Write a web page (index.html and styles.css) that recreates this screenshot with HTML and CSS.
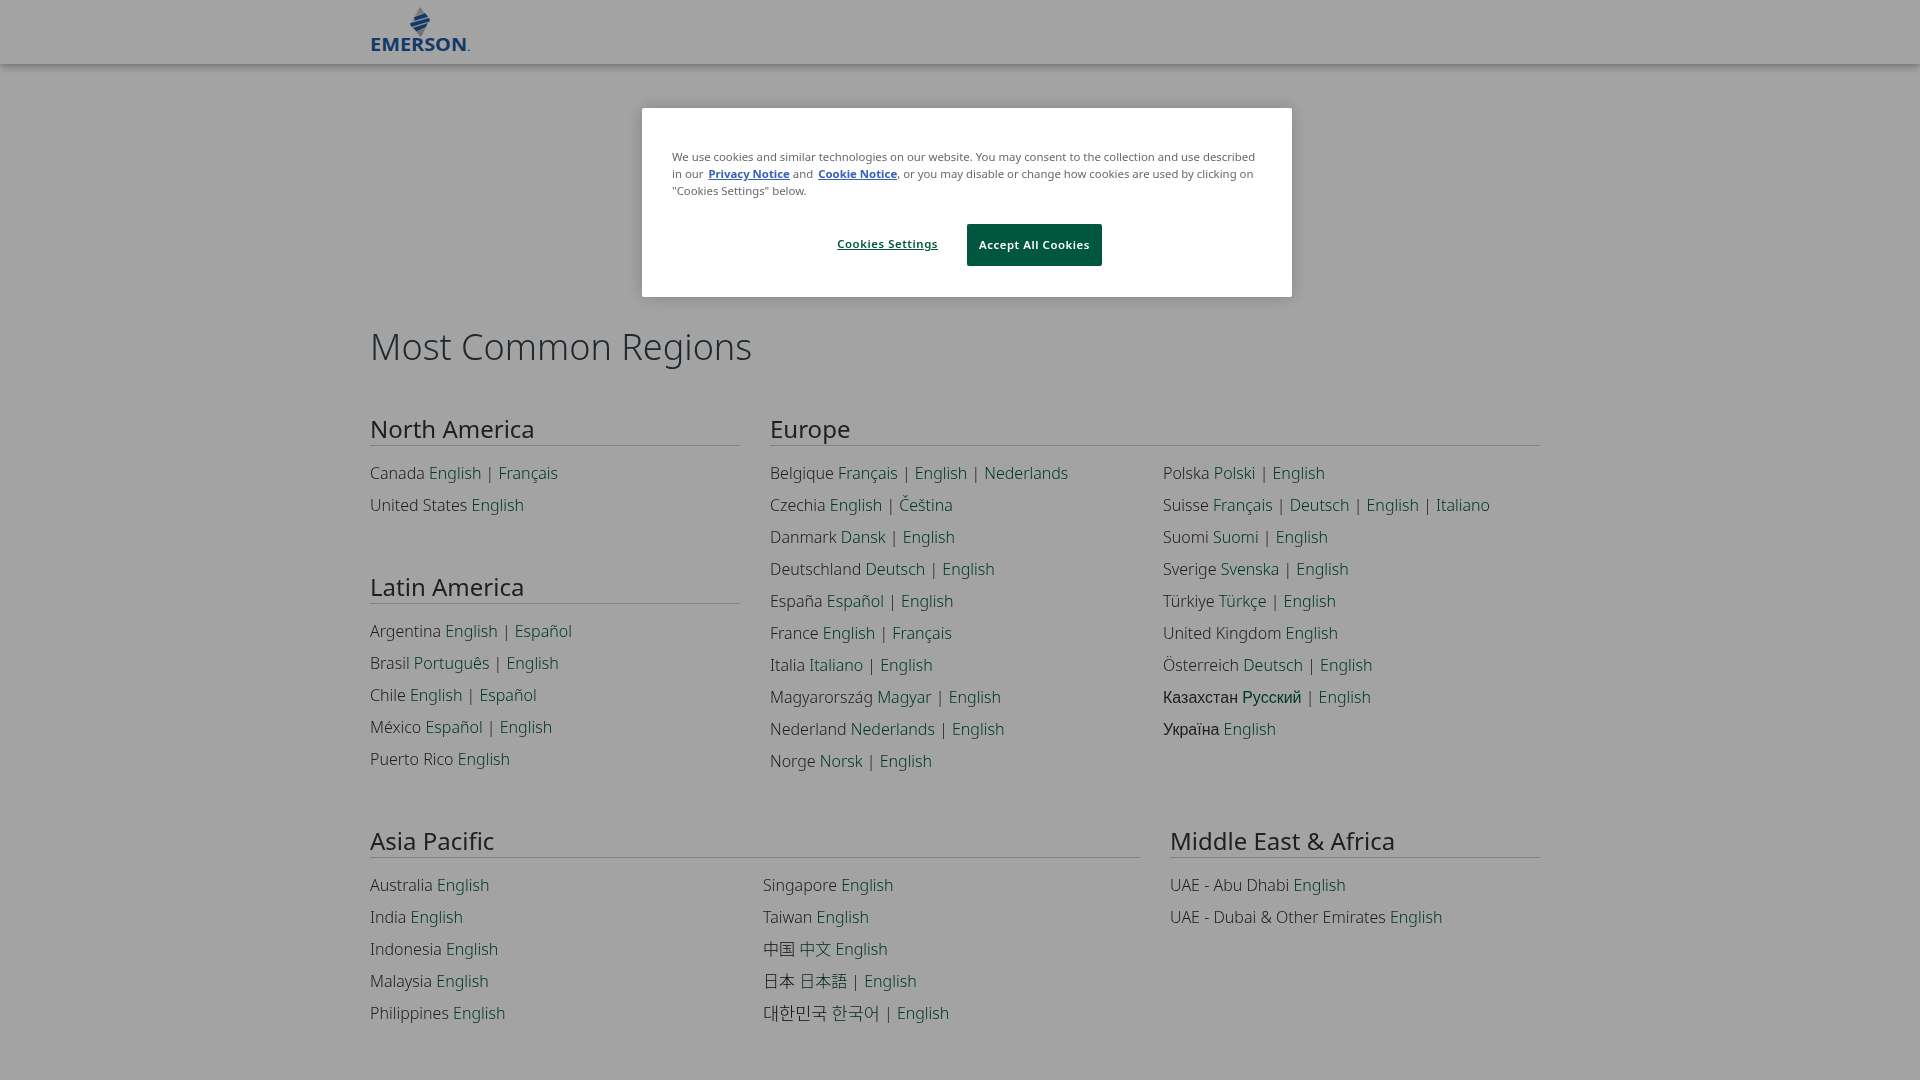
FILE: index.html
```html
<!DOCTYPE html>
<html lang="en">
<head>
<meta charset="utf-8">
<title>Emerson Regions</title>
<link rel="stylesheet" href="styles.css">
</head>
<body>
<header class="site-header">
  <div class="container">
    <a class="logo" href="#">
      <svg class="logo-mark" width="22" height="31" viewBox="0 0 22 31" aria-hidden="true">
        <defs>
          <linearGradient id="silver" x1="0" y1="0" x2="0" y2="1">
            <stop offset="0" stop-color="#a8abae"/>
            <stop offset=".45" stop-color="#e4e6e8"/>
            <stop offset="1" stop-color="#9a9ea1"/>
          </linearGradient>
        </defs>
        <polygon points="11,1 21,14 12,31 1,19" fill="url(#silver)"/>
        <path d="M5 11.3 L16.3 7.3 L19 10.7 L5.7 14.7 Z M1 17.3 L20.3 12 L21 15.3 L2.3 20.7 Z M4.3 22 L18.3 17.3 L17 20.7 L7.7 25.3 Z" fill="#1d5ca5"/>
      </svg>
      <span class="logo-text">EMERSON<span class="logo-dot">.</span></span>
    </a>
  </div>
</header>

<main class="container main">
  <h1 class="page-title">Most Common Regions</h1>
  <div class="regions">
    <div class="stack">
      <section>
        <h2 class="region-title">North America</h2>
        <ul class="links">
          <li>Canada <a href="#">English</a> | <a href="#">Français</a></li>
          <li>United States <a href="#">English</a></li>
        </ul>
      </section>
      <section>
        <h2 class="region-title">Latin America</h2>
        <ul class="links">
          <li>Argentina <a href="#">English</a> | <a href="#">Español</a></li>
          <li>Brasil <a href="#">Português</a> | <a href="#">English</a></li>
          <li>Chile <a href="#">English</a> | <a href="#">Español</a></li>
          <li>México <a href="#">Español</a> | <a href="#">English</a></li>
          <li>Puerto Rico <a href="#">English</a></li>
        </ul>
      </section>
    </div>
    <section class="wide">
      <h2 class="region-title">Europe</h2>
      <div class="two-col">
        <ul class="links">
          <li>Belgique <a href="#">Français</a> | <a href="#">English</a> | <a href="#">Nederlands</a></li>
          <li>Czechia <a href="#">English</a> | <a href="#">Čeština</a></li>
          <li>Danmark <a href="#">Dansk</a> | <a href="#">English</a></li>
          <li>Deutschland <a href="#">Deutsch</a> | <a href="#">English</a></li>
          <li>España <a href="#">Español</a> | <a href="#">English</a></li>
          <li>France <a href="#">English</a> | <a href="#">Français</a></li>
          <li>Italia <a href="#">Italiano</a> | <a href="#">English</a></li>
          <li>Magyarország <a href="#">Magyar</a> | <a href="#">English</a></li>
          <li>Nederland <a href="#">Nederlands</a> | <a href="#">English</a></li>
          <li>Norge <a href="#">Norsk</a> | <a href="#">English</a></li>
        </ul>
        <ul class="links">
          <li>Polska <a href="#">Polski</a> | <a href="#">English</a></li>
          <li>Suisse <a href="#">Français</a> | <a href="#">Deutsch</a> | <a href="#">English</a> | <a href="#">Italiano</a></li>
          <li>Suomi <a href="#">Suomi</a> | <a href="#">English</a></li>
          <li>Sverige <a href="#">Svenska</a> | <a href="#">English</a></li>
          <li>Türkiye <a href="#">Türkçe</a> | <a href="#">English</a></li>
          <li>United Kingdom <a href="#">English</a></li>
          <li>Österreich <a href="#">Deutsch</a> | <a href="#">English</a></li>
          <li><span class="cyr">Казахстан</span> <a class="cyr" href="#">Русский</a> | <a href="#">English</a></li>
          <li><span class="cyr">Україна</span> <a href="#">English</a></li>
        </ul>
      </div>
    </section>
    <section class="wide">
      <h2 class="region-title">Asia Pacific</h2>
      <div class="two-col">
        <ul class="links">
          <li>Australia <a href="#">English</a></li>
          <li>India <a href="#">English</a></li>
          <li>Indonesia <a href="#">English</a></li>
          <li>Malaysia <a href="#">English</a></li>
          <li>Philippines <a href="#">English</a></li>
        </ul>
        <ul class="links">
          <li>Singapore <a href="#">English</a></li>
          <li>Taiwan <a href="#">English</a></li>
          <li><span class="cjk sc" lang="zh">中国</span> <a class="cjk sc" lang="zh" href="#">中文</a> <a href="#">English</a></li>
          <li><span class="cjk jp" lang="ja">日本</span> <a class="cjk jp" lang="ja" href="#">日本語</a> | <a href="#">English</a></li>
          <li><span class="cjk kr" lang="ko">대한민국</span> <a class="cjk kr" lang="ko" href="#">한국어</a> | <a href="#">English</a></li>
        </ul>
      </div>
    </section>
    <section>
      <h2 class="region-title">Middle East &amp; Africa</h2>
      <ul class="links">
        <li>UAE - Abu Dhabi <a href="#">English</a></li>
        <li>UAE - Dubai &amp; Other Emirates <a href="#">English</a></li>
      </ul>
    </section>
  </div>
</main>

<div class="overlay"></div>

<div class="cookie-banner">
  <p class="cookie-text">We use cookies and similar technologies on our website. You may consent to the collection and use described in our <a class="notice-link" href="#">Privacy Notice</a> and <a class="notice-link" href="#">Cookie Notice</a>, or you may disable or change how cookies are used by clicking on "Cookies Settings" below.</p>
  <div class="cookie-actions">
    <button class="settings-btn" type="button">Cookies Settings</button>
    <button class="accept-btn" type="button">Accept All Cookies</button>
  </div>
</div>
</body>
</html>
```
FILE: styles.css
```css
* { box-sizing: border-box; }
html, body { margin: 0; height: 100%; overflow: hidden; }
body {
  padding-right: 10px;
  background: #fff;
  color: #333;
  font-family: "Noto Sans", "Noto Sans CJK SC", sans-serif;
  font-weight: 300;
  font-size: 16px;
  line-height: 32px;
}
.container { width: 1170px; margin: 0 auto; }
.site-header {
  height: 64px;
  margin-right: -10px;
  padding-right: 10px;
  background: #fff;
  box-shadow: 0 2px 8px rgba(0, 0, 0, .35);
  position: relative;
}
.logo {
  display: inline-flex;
  flex-direction: column;
  align-items: flex-start;
  width: 102px;
  text-decoration: none;
  padding-top: 6px;
}
.logo-mark { display: block; margin: 0 0 1px 39px; }
.logo-text {
  font-family: "Open Sans", "Noto Sans", sans-serif;
  font-weight: 700;
  font-size: 17px;
  line-height: 13px;
  color: #1d5ca5;
  white-space: nowrap;
  transform: scaleX(1.17);
  transform-origin: left center;
}
.logo-dot { font-size: 9px; font-weight: 700; }
.main { padding-top: 261px; will-change: transform; }
.page-title {
  margin: 0;
  font-size: 36px;
  font-weight: 300;
  line-height: 44px;
  color: #333f48;
}
.regions {
  display: grid;
  grid-template-columns: repeat(3, 370px);
  column-gap: 30px;
  row-gap: 48px;
  margin-top: 44px;
}
.stack { display: flex; flex-direction: column; gap: 50px; }
.wide { grid-column: span 2; }
.region-title {
  margin: 0 0 11px;
  font-size: 24px;
  font-weight: 400;
  line-height: 32px;
  color: #333;
  border-bottom: 1px solid #ccc;
}
.two-col { display: grid; grid-template-columns: 1fr 1fr; column-gap: 16px; }
.links { list-style: none; margin: 0; padding: 0; }
.links li { height: 32px; white-space: nowrap; }
.links a { color: #00573d; text-decoration: none; }
.cyr { font-family: "Liberation Sans", sans-serif; font-weight: 400; color: #333; }
a.cyr { color: #00573d; }
.cjk { line-height: 1; color: #111; }
.links a.cjk { color: #003d2b; }
.sc { font-family: "Noto Sans CJK SC", sans-serif; }
.jp { font-family: "Noto Sans CJK JP", sans-serif; }
.kr { font-family: "Noto Sans CJK KR", sans-serif; font-size: 17.5px; vertical-align: -1px; }
.overlay { position: fixed; inset: 0; background: rgba(0, 0, 0, .36); }
.cookie-banner {
  position: fixed;
  left: 642px;
  top: 108px;
  width: 650px;
  height: 189px;
  background: #fff;
  border-radius: 2px;
  box-shadow: 0 0 18px rgba(0, 0, 0, .2);
  padding: 40px 30px 0;
}
.cookie-text {
  margin: 0;
  font-size: 11.375px;
  font-weight: 400;
  line-height: 17px;
  color: #696969;
}
.notice-link {
  margin-left: 2px;
  font-weight: 700;
  color: #3860be;
  text-decoration: underline;
}
.cookie-actions {
  display: flex;
  align-items: center;
  justify-content: flex-end;
  gap: 29px;
  margin-top: 25px;
  padding-right: 160px;
}
.settings-btn, .accept-btn {
  font-family: "Noto Sans", sans-serif;
  font-size: 11.375px;
  font-weight: 600;
  letter-spacing: .57px;
  border: 0;
  cursor: pointer;
}
.settings-btn {
  background: none;
  color: #00573d;
  padding: 0 0 3px;
  text-decoration: underline;
}
.accept-btn {
  width: 135px;
  height: 42px;
  background: #00573d;
  color: #fff;
  border-radius: 2px;
  padding: 0 0 1px;
}
```
